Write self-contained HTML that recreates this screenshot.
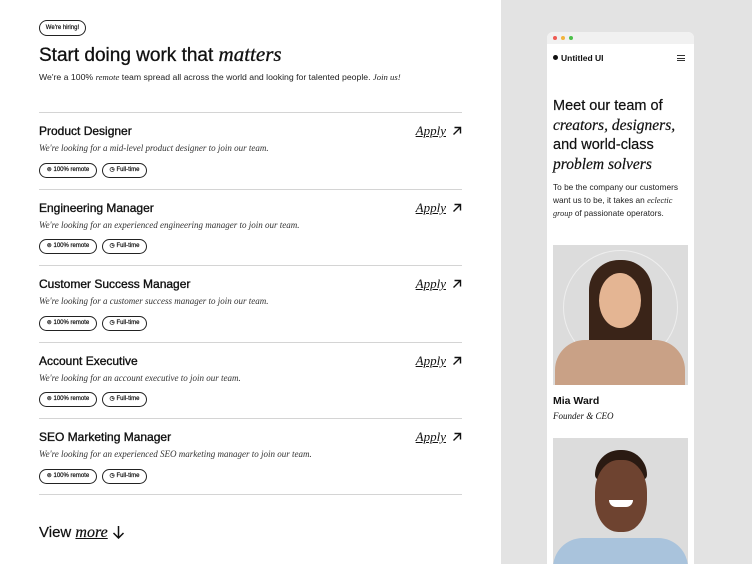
<!DOCTYPE html><html><head><style>
*{margin:0;padding:0;box-sizing:border-box}
body{width:752px;height:564px;overflow:hidden;background:#fff;font-family:"Liberation Sans",sans-serif;color:#111;position:relative}
.serif{font-family:"Liberation Serif",serif;font-style:italic}
.abs{position:absolute}
.pill{position:absolute;border:1px solid #222;border-radius:10px;font-size:6px;height:15px;line-height:13px;white-space:nowrap;text-align:center;-webkit-text-stroke:.2px #111}
.row{position:absolute;left:39px;width:423px;height:77px;border-top:1px solid #d4d4d4}
.row h3{position:absolute;top:11px;font-size:12px;font-weight:normal;-webkit-text-stroke:.35px #111}
.row p{position:absolute;top:30px;font-size:9px;color:#333}
.apply{position:absolute;right:0;top:10px;font-size:13px}
.apply u{font-family:"Liberation Serif",serif;font-style:italic}
.apply svg{vertical-align:-1px;margin-left:6px}
</style></head><body>
<div class="pill" style="left:39px;top:20px;width:47px;height:16px;line-height:14px;font-size:6px">We're hiring!</div>
<div class="abs" style="left:39px;top:42px;font-size:19px;-webkit-text-stroke:.3px #111">Start doing work that <span class="serif" style="font-size:21px">matters</span></div>
<div class="abs" style="left:39px;top:72px;font-size:8.7px;color:#222">We're a 100% <span class="serif">remote</span> team spread all across the world and looking for talented people. <span class="serif">Join us!</span></div>

<div class="row" style="top:112px"><h3>Product Designer</h3><p class="serif">We're looking for a mid-level product designer to join our team.</p>
<div class="pill" style="left:0;top:50px;width:58px">⊚ 100% remote</div><div class="pill" style="left:63px;top:50px;width:45px">◷ Full-time</div>
<div class="apply"><u>Apply</u><svg width="10" height="10" viewBox="0 0 10 10"><path d="M1.5 8.5L8.5 1.5M2.5 1.5H8.5V7.5" fill="none" stroke="#111" stroke-width="1.4"/></svg></div></div>
<div class="row" style="top:189px"><h3>Engineering Manager</h3><p class="serif">We're looking for an experienced engineering manager to join our team.</p>
<div class="pill" style="left:0;top:49px;width:58px">⊚ 100% remote</div><div class="pill" style="left:63px;top:49px;width:45px">◷ Full-time</div>
<div class="apply"><u>Apply</u><svg width="10" height="10" viewBox="0 0 10 10"><path d="M1.5 8.5L8.5 1.5M2.5 1.5H8.5V7.5" fill="none" stroke="#111" stroke-width="1.4"/></svg></div></div>
<div class="row" style="top:265px"><h3>Customer Success Manager</h3><p class="serif">We're looking for a customer success manager to join our team.</p>
<div class="pill" style="left:0;top:50px;width:58px">⊚ 100% remote</div><div class="pill" style="left:63px;top:50px;width:45px">◷ Full-time</div>
<div class="apply"><u>Apply</u><svg width="10" height="10" viewBox="0 0 10 10"><path d="M1.5 8.5L8.5 1.5M2.5 1.5H8.5V7.5" fill="none" stroke="#111" stroke-width="1.4"/></svg></div></div>
<div class="row" style="top:342px"><h3>Account Executive</h3><p class="serif">We're looking for an account executive to join our team.</p>
<div class="pill" style="left:0;top:49px;width:58px">⊚ 100% remote</div><div class="pill" style="left:63px;top:49px;width:45px">◷ Full-time</div>
<div class="apply"><u>Apply</u><svg width="10" height="10" viewBox="0 0 10 10"><path d="M1.5 8.5L8.5 1.5M2.5 1.5H8.5V7.5" fill="none" stroke="#111" stroke-width="1.4"/></svg></div></div>
<div class="row" style="top:418px;border-bottom:1px solid #d4d4d4"><h3>SEO Marketing Manager</h3><p class="serif">We're looking for an experienced SEO marketing manager to join our team.</p>
<div class="pill" style="left:0;top:50px;width:58px">⊚ 100% remote</div><div class="pill" style="left:63px;top:50px;width:45px">◷ Full-time</div>
<div class="apply"><u>Apply</u><svg width="10" height="10" viewBox="0 0 10 10"><path d="M1.5 8.5L8.5 1.5M2.5 1.5H8.5V7.5" fill="none" stroke="#111" stroke-width="1.4"/></svg></div></div>
<div class="abs" style="left:39px;top:524px;font-size:15px;-webkit-text-stroke:.2px #111">View <u class="serif" style="font-size:16px">more</u> <svg width="13" height="14" viewBox="0 0 13 14" style="vertical-align:-2px"><path d="M6.5 1V13M1.5 8L6.5 13L11.5 8" fill="none" stroke="#111" stroke-width="1.5"/></svg></div>

<div class="abs" style="left:501px;top:0;width:251px;height:564px;background:#e3e3e3"></div>
<div class="abs" style="left:547px;top:32px;width:147px;height:532px;background:#fff;border-radius:6px 6px 0 0;overflow:hidden">
<div style="height:12px;background:#f1f1f1;position:relative">
<span class="abs" style="left:6px;top:4px;width:4px;height:4px;border-radius:50%;background:#ee5a52"></span>
<span class="abs" style="left:14px;top:4px;width:4px;height:4px;border-radius:50%;background:#f2b43c"></span>
<span class="abs" style="left:22px;top:4px;width:4px;height:4px;border-radius:50%;background:#4cc04a"></span></div>
<div class="abs" style="left:6px;top:21px;font-size:8.5px;font-weight:bold"><span style="display:inline-block;width:5px;height:5px;border-radius:50%;background:#111;margin-right:3px;vertical-align:1px"></span>Untitled UI</div>
<div class="abs" style="left:130px;top:23px;width:8px;height:6px;border-top:1px solid #333;border-bottom:1px solid #333"><div style="margin-top:2px;border-top:1px solid #333"></div></div>
<div class="abs" style="left:6px;top:65px;font-size:14.5px;line-height:19px;width:140px;-webkit-text-stroke:.2px #111">Meet our team of <span class="serif" style="font-size:15.5px">creators, designers,</span> and world-class <span class="serif" style="font-size:15.5px">problem solvers</span></div>
<div class="abs" style="left:6px;top:149px;font-size:8.3px;line-height:13px;width:133px;color:#222">To be the company our customers want us to be, it takes an <span class="serif">eclectic group</span> of passionate operators.</div>
<div class="abs" style="left:6px;top:213px;width:135px;height:140px;background:#dcdcdc;overflow:hidden">
<div class="abs" style="left:10px;top:5px;width:115px;height:115px;border:1px solid #eee;border-radius:50%"></div>
<div class="abs" style="left:36px;top:15px;width:63px;height:105px;background:#3a2418;border-radius:30px 30px 10px 10px"></div>
<div class="abs" style="left:46px;top:28px;width:42px;height:55px;background:#e4b593;border-radius:50%"></div>
<div class="abs" style="left:2px;top:95px;width:130px;height:60px;background:#c9a186;border-radius:30px 30px 0 0"></div>
</div>
<div class="abs" style="left:6px;top:363px;font-size:10.5px;font-weight:bold">Mia Ward</div>
<div class="abs serif" style="left:6px;top:379px;font-size:9px">Founder &amp; CEO</div>
<div class="abs" style="left:6px;top:406px;width:135px;height:140px;background:#dcdcdc;overflow:hidden">
<div class="abs" style="left:42px;top:12px;width:52px;height:30px;background:#2a1a12;border-radius:25px 25px 5px 5px"></div>
<div class="abs" style="left:42px;top:22px;width:52px;height:72px;background:#6e4330;border-radius:45%"></div>
<div class="abs" style="left:56px;top:62px;width:24px;height:7px;background:#fff;border-radius:0 0 10px 10px"></div>
<div class="abs" style="left:0;top:100px;width:135px;height:40px;background:#a9c3dc;border-radius:30px 30px 0 0"></div>
</div>
</div>
</body></html>
